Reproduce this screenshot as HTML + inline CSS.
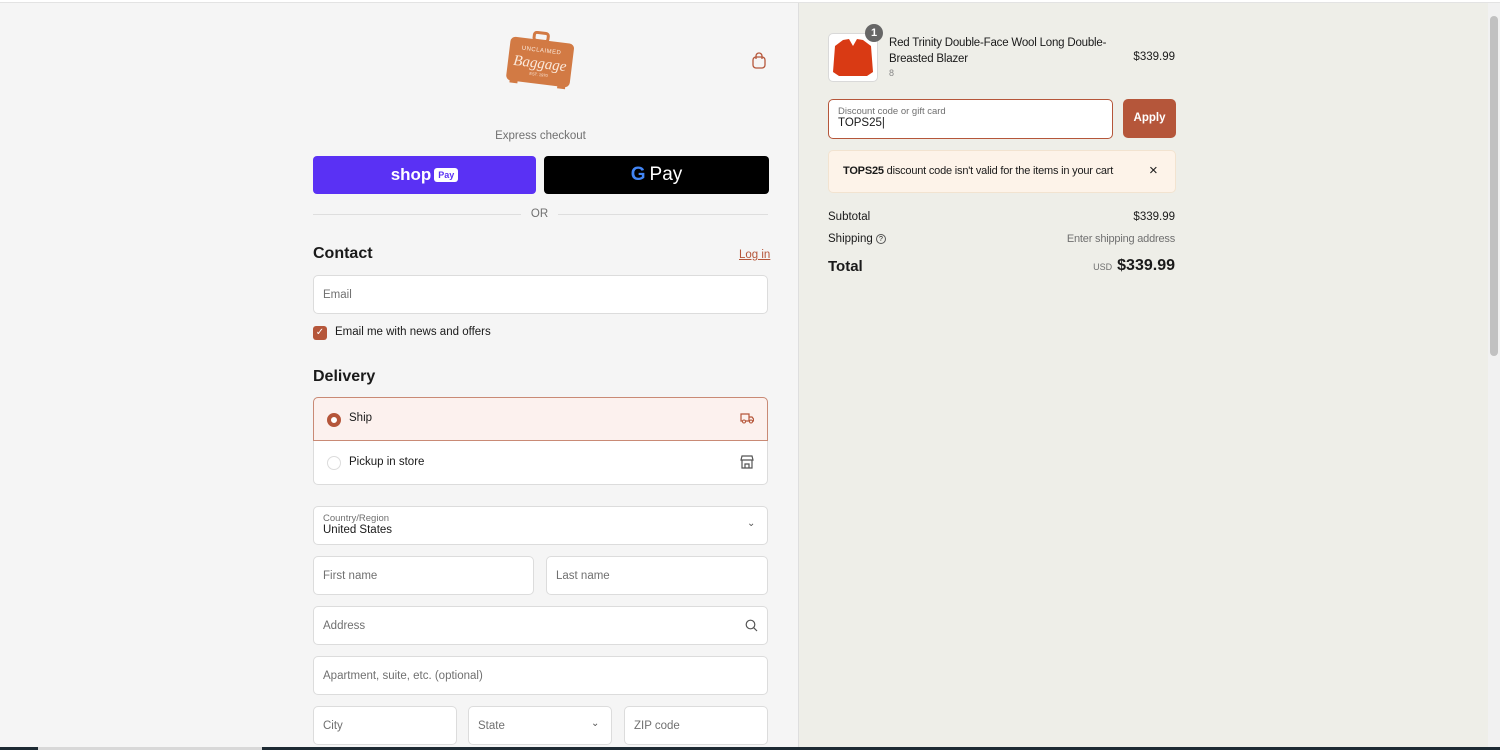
<!DOCTYPE html>
<html><head><meta charset="utf-8"><style>
*{box-sizing:border-box;margin:0;padding:0}
body{width:1500px;height:750px;overflow:hidden;font-family:"Liberation Sans",sans-serif;background:#f5f5f5;position:relative;color:#1a1a1a;font-size:11.5px}
.abs{position:absolute}
.r{position:absolute;right:325px;text-align:right}
.right{position:absolute;left:798px;top:3px;width:690px;height:744px;background:#eeeee8;border-left:1px solid #dedede}
.inp{position:absolute;background:#fff;border:1px solid #dcdcdc;border-radius:5px;color:#707070;font-size:11.5px;padding-left:9px;display:flex;align-items:center}
</style></head><body>
<div class="abs" style="left:0;top:0;width:1500px;height:3px;background:#fff;border-bottom:1px solid #e3e3e3"></div>
<svg class="abs" style="left:503px;top:31px" width="75" height="60" viewBox="0 0 75 60">
<g transform="rotate(7 37 32)">
<rect x="28" y="2" width="14" height="8" rx="2.5" fill="none" stroke="#d27a44" stroke-width="3"/>
<rect x="5" y="9" width="64" height="44" rx="5" fill="#d27a44"/>
<rect x="9" y="51" width="8" height="4" fill="#d27a44"/><rect x="57" y="51" width="8" height="4" fill="#d27a44"/>
<text x="37" y="21" font-size="6" fill="#fbe9db" text-anchor="middle" letter-spacing="0.5">UNCLAIMED</text>
<text x="37" y="37" font-size="15" fill="#fbe9db" text-anchor="middle" font-style="italic" font-family="Liberation Serif">Baggage</text>
<text x="37" y="45" font-size="4" fill="#fbe9db" text-anchor="middle">EST. 1970</text>
</g></svg>
<svg class="abs" style="left:751px;top:52px" width="16" height="17" viewBox="0 0 16 17"><rect x="2" y="5" width="12" height="11" rx="3" fill="none" stroke="#b5563a" stroke-width="1.3"/><path d="M5 7V4a3 3 0 0 1 6 0v3" fill="none" stroke="#b5563a" stroke-width="1.3"/></svg>
<div class="abs" style="left:313px;top:130px;width:455px;text-align:center;color:#707070;font-size:11.5px">Express checkout</div>
<div class="abs" style="left:313px;top:156px;width:223px;height:38px;background:#5a31f4;border-radius:4px;color:#fff;display:flex;align-items:center;justify-content:center;font-weight:bold;font-size:17px">shop<span style="background:#fff;color:#5a31f4;font-size:9px;padding:2px 4px;border-radius:3px;margin-left:3px">Pay</span></div>
<div class="abs" style="left:544px;top:156px;width:225px;height:38px;background:#000;border-radius:4px;color:#fff;display:flex;align-items:center;justify-content:center;font-size:19px"><span style="font-weight:bold;color:#4285f4;margin-right:4px">G</span>Pay</div>
<div class="abs" style="left:313px;top:214px;width:208px;height:1px;background:#dedede"></div>
<div class="abs" style="left:558px;top:214px;width:210px;height:1px;background:#dedede"></div>
<div class="abs" style="left:521px;top:208px;width:37px;text-align:center;color:#707070">OR</div>
<div class="abs" style="left:313px;top:245px;font-size:16px;font-weight:bold">Contact</div>
<div class="abs" style="left:739px;top:249px;color:#b5563a;text-decoration:underline">Log in</div>
<div class="inp" style="left:313px;top:275px;width:455px;height:39px">Email</div>
<div class="abs" style="left:313px;top:326px;width:14px;height:14px;background:#b5563a;border-radius:3px;color:#fff;font-size:10px;text-align:center;line-height:14px">✓</div>
<div class="abs" style="left:335px;top:326px">Email me with news and offers</div>
<div class="abs" style="left:313px;top:368px;font-size:16px;font-weight:bold">Delivery</div>
<div class="abs" style="left:313px;top:397px;width:455px;height:88px;background:#fff;border:1px solid #dcdcdc;border-radius:5px"></div>
<div class="abs" style="left:313px;top:397px;width:455px;height:44px;background:#fcf1ee;border:1px solid #c98a75;border-radius:5px 5px 0 0"></div>
<div class="abs" style="left:327px;top:413px;width:14px;height:14px;border-radius:50%;border:4px solid #b5563a;background:#fff"></div>
<div class="abs" style="left:349px;top:412px">Ship</div>
<svg class="abs" style="left:740px;top:412px" width="14" height="12" viewBox="0 0 14 12"><path d="M1 2h8v7H1zM9 5h3l1.5 2v2H9" fill="none" stroke="#b5563a" stroke-width="1.2"/><circle cx="4" cy="9.5" r="1.5" fill="#fcf1ee" stroke="#b5563a"/><circle cx="11" cy="9.5" r="1.5" fill="#fcf1ee" stroke="#b5563a"/></svg>
<div class="abs" style="left:327px;top:456px;width:14px;height:14px;border-radius:50%;border:1px solid #dcdcdc;background:#fff"></div>
<div class="abs" style="left:349px;top:456px">Pickup in store</div>
<svg class="abs" style="left:740px;top:455px" width="14" height="14" viewBox="0 0 14 14"><path d="M2 1h10l1 4H1zM2 5v8h10V5M5 13V9h4v4" fill="none" stroke="#555" stroke-width="1.2"/></svg>
<div class="inp" style="left:313px;top:506px;width:455px;height:39px;display:block;padding-top:6px"><div style="font-size:9.5px">Country/Region</div><div style="color:#1a1a1a;font-size:11.5px">United States</div></div>
<div class="abs" style="left:747px;top:518px;color:#555;font-size:10px">⌄</div>
<div class="inp" style="left:313px;top:556px;width:221px;height:39px">First name</div>
<div class="inp" style="left:546px;top:556px;width:222px;height:39px">Last name</div>
<div class="inp" style="left:313px;top:606px;width:455px;height:39px">Address</div>
<svg class="abs" style="left:745px;top:619px" width="13" height="13" viewBox="0 0 13 13"><circle cx="5.5" cy="5.5" r="4.3" fill="none" stroke="#555" stroke-width="1.2"/><path d="M8.7 8.7L12 12" stroke="#555" stroke-width="1.2"/></svg>
<div class="inp" style="left:313px;top:656px;width:455px;height:39px">Apartment, suite, etc. (optional)</div>
<div class="inp" style="left:313px;top:706px;width:144px;height:39px">City</div>
<div class="inp" style="left:468px;top:706px;width:144px;height:39px">State</div>
<div class="abs" style="left:591px;top:718px;color:#555;font-size:10px">⌄</div>
<div class="inp" style="left:624px;top:706px;width:144px;height:39px">ZIP code</div>
<div class="right"></div>
<div class="abs" style="left:828px;top:33px;width:50px;height:49px;background:#fff;border:1px solid #d9d9d9;border-radius:5px;overflow:hidden"><svg width="48" height="47" viewBox="0 0 48 47"><path d="M14 6 L20 5 L24 12 L28 5 L34 6 L42 12 L44 38 L38 42 L10 42 L4 38 L6 12 Z" fill="#d93a14"/></svg></div>
<div class="abs" style="left:865px;top:24px;width:18px;height:18px;border-radius:50%;background:#666;color:#fff;font-size:11px;font-weight:bold;text-align:center;line-height:18px">1</div>
<div class="abs" style="left:889px;top:35px;width:225px;font-size:11.5px;line-height:16px;letter-spacing:-0.2px">Red Trinity Double-Face Wool Long Double-Breasted Blazer</div>
<div class="abs" style="left:889px;top:68px;font-size:9px;color:#888">8</div>
<div class="r" style="top:51px">$339.99</div>
<div class="abs" style="left:828px;top:99px;width:285px;height:40px;background:#fff;border:1.5px solid #b5563a;border-radius:5px;padding:6px 0 0 9px"><div style="font-size:9.5px;color:#707070">Discount code or gift card</div><div style="font-size:11.5px">TOPS25|</div></div>
<div class="abs" style="left:1123px;top:99px;width:53px;height:39px;background:#b5563a;border-radius:5px;color:#fff;font-weight:bold;text-align:center;line-height:39px">Apply</div>
<div class="abs" style="left:828px;top:150px;width:348px;height:43px;background:#fdf3e9;border:1px solid #f2e3d0;border-radius:5px;padding:14px 0 0 14px;font-size:11px;letter-spacing:-0.2px"><b>TOPS25</b> discount code isn't valid for the items in your cart</div>
<div class="abs" style="left:1149px;top:162px;font-size:15px">×</div>
<div class="abs" style="left:828px;top:211px">Subtotal</div>
<div class="r" style="top:211px">$339.99</div>
<div class="abs" style="left:828px;top:233px">Shipping <span style="display:inline-block;width:10px;height:10px;border:1px solid #555;border-radius:50%;font-size:7px;text-align:center;line-height:9px;vertical-align:middle">?</span></div>
<div class="r" style="top:233px;color:#707070;font-size:11px;letter-spacing:-0.2px">Enter shipping address</div>
<div class="abs" style="left:828px;top:258px;font-size:15px;font-weight:bold">Total</div>
<div class="r" style="top:257px;font-size:16px;font-weight:bold"><span style="font-size:9px;color:#707070;font-weight:normal;margin-right:5px">USD</span>$339.99</div>
<div class="abs" style="left:1488px;top:3px;width:12px;height:744px;background:#f1f1f1"></div>
<div class="abs" style="left:1490px;top:16px;width:8px;height:340px;background:#c1c1c1;border-radius:4px"></div>
<div class="abs" style="left:0;top:747px;width:1500px;height:3px;background:#1d2a33"></div>
<div class="abs" style="left:38px;top:747px;width:224px;height:3px;background:#d8d8d8"></div>
</body></html>
